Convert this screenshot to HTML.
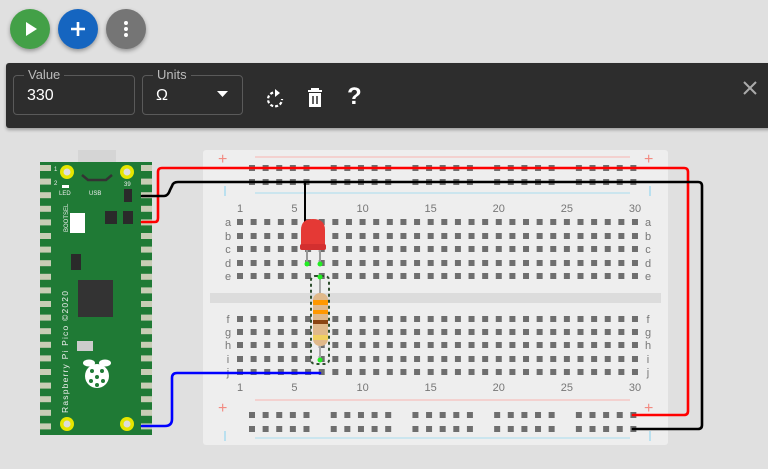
<!DOCTYPE html>
<html><head><meta charset="utf-8"><style>
body{margin:0;width:768px;height:469px;background:#e0e0e0;overflow:hidden;font-family:"Liberation Sans",sans-serif;position:relative}
.btn{position:absolute;top:9px;width:40px;height:40px;border-radius:50%;box-shadow:0 2px 4px rgba(0,0,0,.35)}
.bar{position:absolute;left:6px;top:63px;width:770px;height:65px;background:#2d2d2d;border-radius:3px;box-shadow:0 2px 3px rgba(0,0,0,.3)}
.fld{position:absolute;top:12px;height:38px;border:1px solid #5a5a5a;border-radius:4px}
.lbl{position:absolute;top:-8px;left:10px;background:#2d2d2d;color:#bbb;font-size:13px;padding:0 4px;line-height:14px}
.val{position:absolute;left:13px;top:11px;color:#fff;font-size:16px}
</style></head><body>
<div class="btn" style="left:10px;background:#43a047"><svg width="40" height="40"><path d="M16 13 L27 20 L16 27Z" fill="#fff"/></svg></div>
<div class="btn" style="left:58px;background:#1565c0"><svg width="40" height="40"><path d="M20 13V27M13 20H27" stroke="#fff" stroke-width="2.6"/></svg></div>
<div class="btn" style="left:106px;background:#757575"><svg width="40" height="40"><circle cx="20" cy="14" r="2" fill="#fff"/><circle cx="20" cy="20" r="2" fill="#fff"/><circle cx="20" cy="26" r="2" fill="#fff"/></svg></div>
<div class="bar">
<div class="fld" style="left:7px;width:120px"><span class="lbl">Value</span><span class="val">330</span></div>
<div class="fld" style="left:136px;width:99px"><span class="lbl">Units</span><span class="val">Ω</span><svg style="position:absolute;left:74px;top:15px" width="12" height="8"><path d="M0 0H11L5.5 6Z" fill="#fff"/></svg></div>
<svg style="position:absolute;left:258px;top:25px" width="22" height="22"><path d="M14 5 A7 7 0 1 0 18 11" stroke="#fff" stroke-width="2.2" fill="none" stroke-dasharray="3 2"/><path d="M11 1 L16 5 L11 9Z" fill="#fff"/></svg>
<svg style="position:absolute;left:300px;top:25px" width="20" height="22"><path d="M2 3H16M6 3V1H12V3" stroke="#fff" stroke-width="2" fill="none"/><path d="M3 5H15V19H3Z" fill="#fff"/><path d="M7 8V16M11 8V16" stroke="#2d2d2d" stroke-width="1.5"/></svg>
<div style="position:absolute;left:341px;top:20px;color:#fff;font-size:24px;font-weight:bold">?</div>
<svg style="position:absolute;left:736px;top:17px" width="16" height="16"><path d="M2 2L14 14M14 2L2 14" stroke="#aaa" stroke-width="2"/></svg>
</div>
<svg id="s" width="768" height="469" style="position:absolute;left:0;top:0">
<rect x="203" y="150" width="465" height="295" rx="3" fill="#eeeeee"/>
<rect x="210" y="293" width="451" height="10" fill="#dcdcdc"/>
<g font-size="16" fill="#f28b82"><text x="218" y="164">+</text><text x="644" y="164">+</text><text x="218" y="413">+</text><text x="644" y="413">+</text></g>
<path d="M255 157H630M255 400H630" stroke="#f8b4b0"/>
<path d="M255 193H630M255 438H630" stroke="#a8dcef"/>
<path d="M225 186V196M650 186V196M225 431V441M650 431V441" stroke="#a8dcef" stroke-width="1.5"/>
<g id="holes" fill="#6e6e6e"></g>
<g id="txt" font-size="11" fill="#777"></g>
<!-- pico -->
<rect x="78" y="150" width="38" height="33" fill="#d5d5d5"/>
<rect x="40" y="162" width="112" height="273" fill="#1f7a35"/>
<g id="pins" fill="#c8cdb5"></g>
<g fill="#e6e600"><circle cx="67" cy="172" r="7"/><circle cx="127" cy="172" r="7"/><circle cx="67" cy="424" r="7"/><circle cx="127" cy="424" r="7"/></g>
<g fill="#ddd"><circle cx="67" cy="172" r="3.5"/><circle cx="127" cy="172" r="3.5"/><circle cx="67" cy="424" r="3.5"/><circle cx="127" cy="424" r="3.5"/></g>
<path d="M82 175L88 180H106L112 175" stroke="#333" stroke-width="2.5" fill="none"/>
<rect x="62" y="185" width="7" height="3" fill="#fff"/>
<g fill="#eee" font-size="6"><text x="59" y="195">LED</text><text x="89" y="195">USB</text><text x="124" y="186">39</text><text x="54" y="171">1</text><text x="54" y="185">2</text></g>
<rect x="124" y="189" width="8" height="13" fill="#2a2a2a"/>
<rect x="105" y="211" width="12" height="13" fill="#2a2a2a"/><rect x="123" y="211" width="10" height="13" fill="#2a2a2a"/>
<rect x="70" y="213" width="15" height="20" fill="#fff"/>
<rect x="71" y="254" width="10" height="16" fill="#2a2a2a"/>
<rect x="78" y="280" width="35" height="37" fill="#333"/>
<rect x="77" y="341" width="16" height="10" fill="#ccc"/>
<text transform="translate(68,232) rotate(-90)" font-size="6" fill="#eee">BOOTSEL</text>
<text transform="translate(68,413) rotate(-90)" font-size="8.5" fill="#eee" letter-spacing="1.2">Raspberry Pi Pico ©2020</text>
<g fill="#fff"><circle cx="97" cy="376" r="12"/><ellipse cx="89" cy="363" rx="6" ry="3.5"/><ellipse cx="105" cy="363" rx="6" ry="3.5"/></g>
<g fill="#1f7a35"><circle cx="92" cy="371" r="2"/><circle cx="102" cy="371" r="2"/><circle cx="97" cy="377" r="2"/><circle cx="91" cy="381" r="2"/><circle cx="103" cy="381" r="2"/><circle cx="97" cy="385" r="2"/></g>
<!-- wires -->
<g fill="none" stroke-width="2.6" stroke-linecap="round">
<path d="M142 222H155Q158 222 158 218V172Q158 168 162 168H633H684Q688 168 688 172V411Q688 415 684 415H633" stroke="#f00"/>
<path d="M142 196H164Q168 196 170 190L172 186Q173 182 178 182H633H698Q702 182 702 186V425Q702 429 698 429H633" stroke="#000"/>
<path d="M142 426H165Q172 426 172 419V378Q172 373 177 373H320" stroke="#00f"/>
<path d="M305 182V236" stroke="#000" stroke-width="2"/>
</g>
<!-- LED -->
<path d="M307 248V264M320 250V264" stroke="#999" stroke-width="2"/>
<path d="M301 230Q301 219 313 219Q325 219 325 230V248H301Z" fill="#e53935"/>
<rect x="300" y="244" width="26" height="6" rx="2" fill="#d32f2f"/>
<circle cx="307" cy="264" r="2.5" fill="#2e2"/><circle cx="320" cy="264" r="2.5" fill="#2e2"/>
<!-- resistor -->
<rect x="311" y="276" width="18" height="88" fill="none" stroke="#2f4f2f" stroke-width="2" stroke-dasharray="3 3" rx="4"/>
<path d="M320 277V360" stroke="#aaa" stroke-width="2"/>
<rect x="313" y="293" width="15" height="53" rx="7" fill="#e0b98a"/>
<rect x="313" y="300" width="15" height="5" fill="#ff9800"/>
<rect x="313" y="310" width="15" height="4" fill="#ff9800"/>
<rect x="313" y="320" width="15" height="4" fill="#8b4513"/>
<rect x="313" y="335" width="15" height="5" fill="#f0d060"/>
<circle cx="320" cy="277" r="2.5" fill="#2e2"/><circle cx="320" cy="360" r="2.5" fill="#2e2"/>
</svg>
<script>
var ns="http://www.w3.org/2000/svg",h=document.getElementById('holes'),t=document.getElementById('txt'),p=document.getElementById('pins');
function r(g,x,y,w,hh,f){var e=document.createElementNS(ns,'rect');e.setAttribute('x',x);e.setAttribute('y',y);e.setAttribute('width',w);e.setAttribute('height',hh);if(f)e.setAttribute('fill',f);g.appendChild(e);}
function tx(s,x,y,a){var e=document.createElementNS(ns,'text');e.setAttribute('x',x);e.setAttribute('y',y);if(a)e.setAttribute('text-anchor',a);e.textContent=s;t.appendChild(e);}
var P=13.62;
var rows=[222,236,249,263,276,319,332,345,359,372],L="abcdefghij";
for(var i=0;i<10;i++){for(var c=0;c<30;c++)r(h,240+c*P-3,rows[i]-3,6,6);tx(L[i],228,rows[i]+4,'middle');tx(L[i],648,rows[i]+4,'middle');}
[1,5,10,15,20,25,30].forEach(function(n){var x=240+(n-1)*P;tx(n,x,212,'middle');tx(n,x,391,'middle');});
[168,182,415,429].forEach(function(y){for(var g=0;g<5;g++)for(var k=0;k<5;k++)r(h,252+g*6*P+k*P-3,y-3,6,6);});
for(var i=0;i<20;i++){var y=168+i*13.6;r(p,40,y-3,11,6);r(p,141,y-3,11,6);}
</script>
</body></html>
